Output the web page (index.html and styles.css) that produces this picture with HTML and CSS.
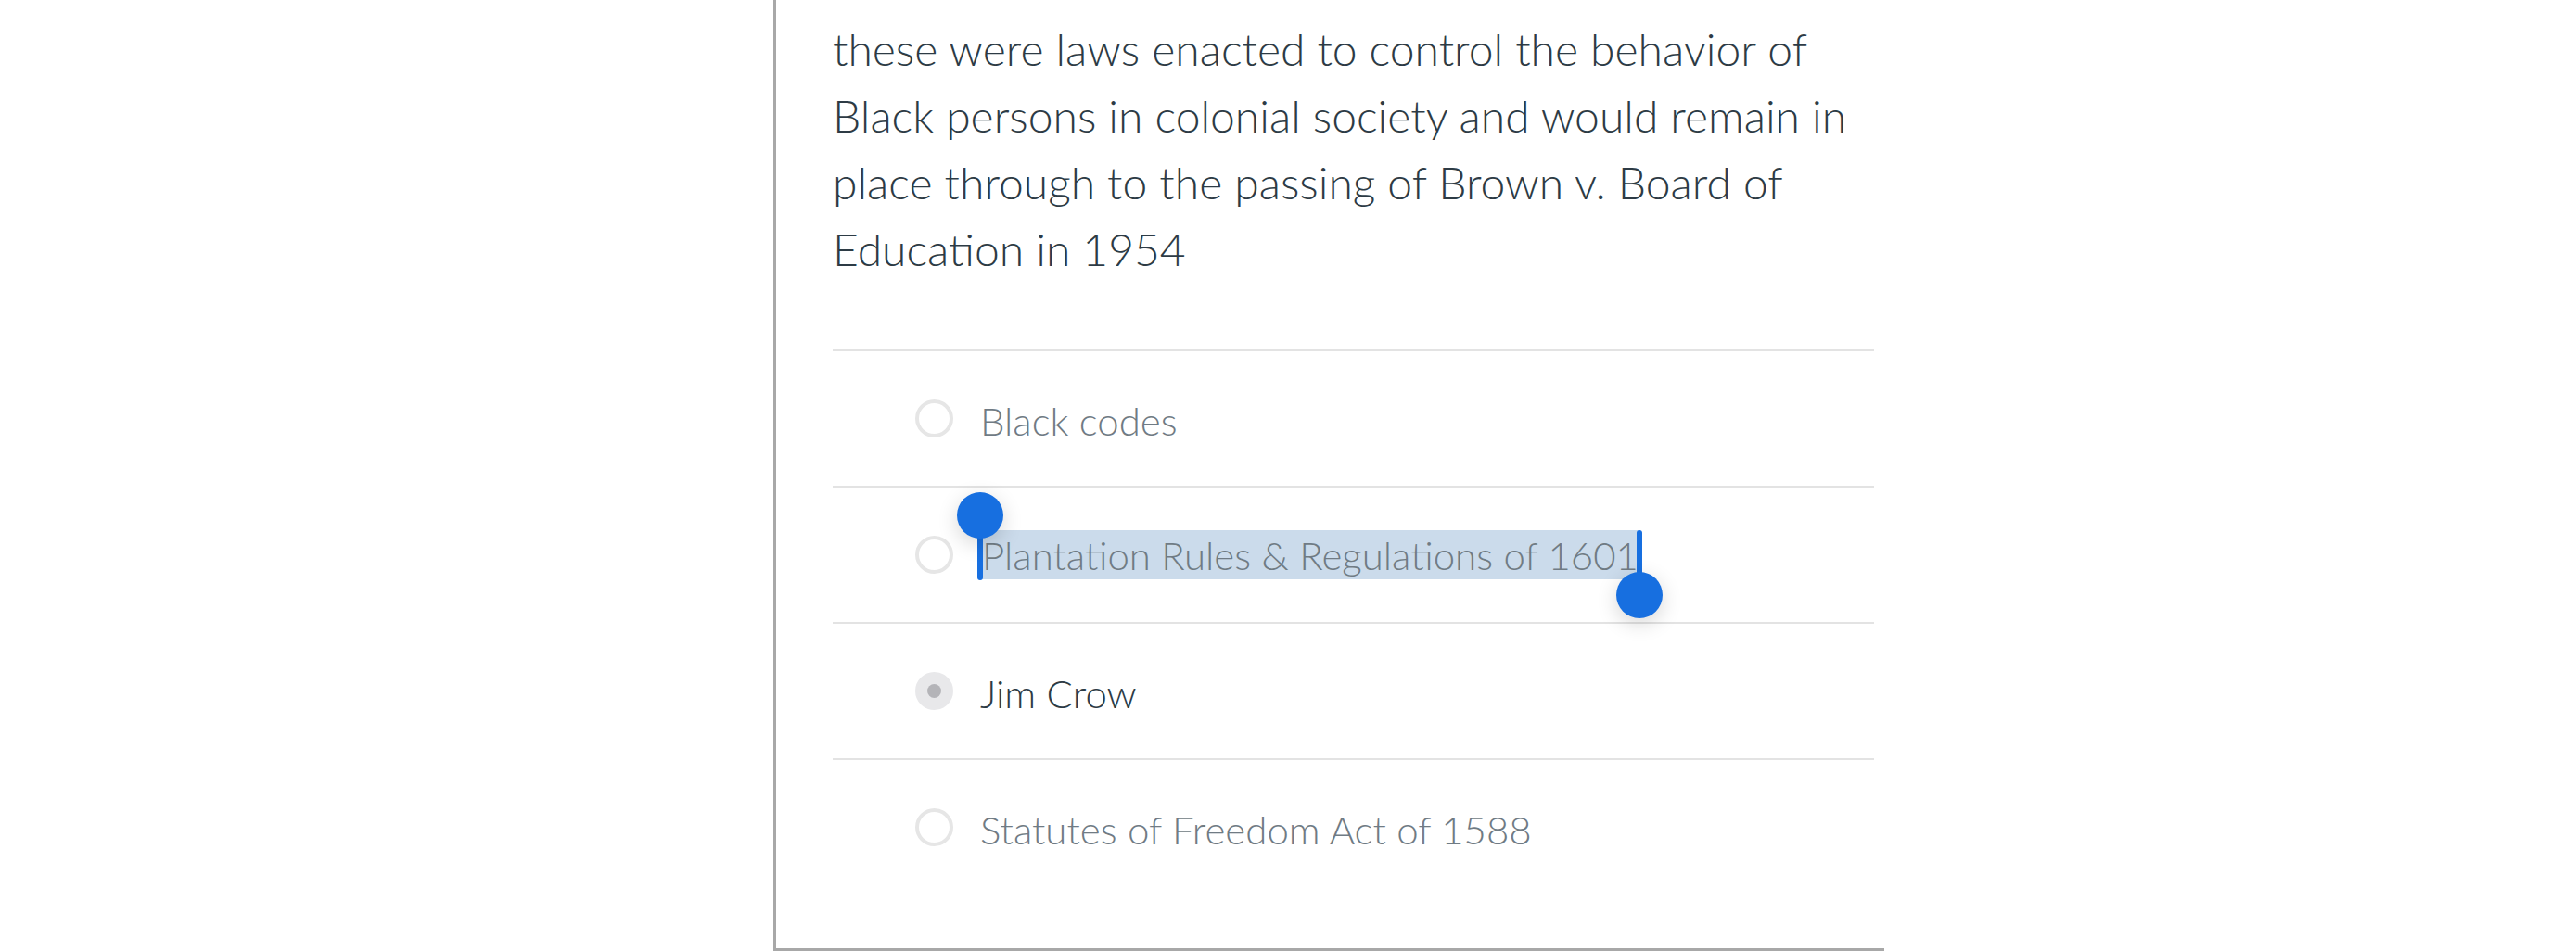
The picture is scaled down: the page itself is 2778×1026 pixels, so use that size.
FILE: index.html
```html
<!DOCTYPE html>
<html>
<head>
    <meta charset="utf-8" />
    <title>Quiz question</title>
    <link rel="stylesheet" href="styles.css">
</head>
<body>
    <div class="question-card">
        <div class="question-text">
            these were laws enacted to control the behavior of Black persons in colonial society and would remain in place through to the passing of Brown v. Board of Education in 1954
        </div>
        <ul class="answers">
            <li class="answer">
                <span class="radio"></span>
                <span class="answer-label">Black codes</span>
            </li>
            <li class="answer">
                <span class="radio"></span>
                <span class="answer-label selection">Plantation Rules &amp; Regulations of 1601<span class="handle handle-start"></span><span class="handle handle-end"></span></span>
            </li>
            <li class="answer" id="answer-checked">
                <span class="radio"></span>
                <span class="answer-label">Jim Crow</span>
            </li>
            <li class="answer">
                <span class="radio"></span>
                <span class="answer-label">Statutes of Freedom Act of 1588</span>
            </li>
        </ul>
    </div>
</body>
</html>
```

FILE: styles.css
```css
body {
    background-color: white;
    color: #2d3b45;
    font-family: Lato, "Open Sans", sans-serif;
    font-weight: 300;
    margin: 0px;
}

.question-card {
    margin-left: 834px;
    width: 1198px;
    height: 1026px;
    box-sizing: border-box;
    border-left: 3px solid #a8a8a8;
    border-bottom: 3px solid #a8a8a8;
    padding: 17px 0 0 61px;
}

.question-text {
    width: 1123px;
    font-size: 48px;
    line-height: 72px;
    color: #2d3b45;
}

.answers {
    list-style-type: none;
    margin: 72px 0 0 0;
    padding: 0;
    width: 1123px;
}

.answer {
    display: flex;
    align-items: center;
    height: 147px;
    box-sizing: border-box;
    border-top: 2px solid #e3e3e3;
    padding-left: 89px;
}

.answer .radio {
    width: 41px;
    height: 41px;
    box-sizing: border-box;
    border: 4px solid #e6e6e6;
    border-radius: 50%;
    margin-right: 29px;
    flex-shrink: 0;
    position: relative;
}

.answer-label {
    font-size: 42px;
    padding-top: 5px;
    color: #707b84;
}

#answer-checked .radio {
    background-color: #e8e8ea;
    border-color: #e8e8ea;
}

#answer-checked .radio::after {
    content: "";
    position: absolute;
    left: 9px;
    top: 9px;
    width: 15px;
    height: 15px;
    border-radius: 50%;
    background-color: #b4b4b8;
}

#answer-checked .answer-label {
    color: #2d3b45;
}

.selection {
    position: relative;
    background-color: #cbdbeb;
    padding: 2px 0 1px 2px;
}

.handle {
    position: absolute;
    width: 6px;
    height: 54px;
    background-color: #176fe0;
    border-radius: 3px;
}

.handle::before {
    content: "";
    position: absolute;
    left: -22px;
    width: 50px;
    height: 50px;
    border-radius: 50%;
    background-color: #176fe0;
    box-shadow: 0 6px 22px rgba(0, 0, 0, 0.16);
}

.handle-start {
    left: -3px;
    top: 0;
}

.handle-start::before {
    top: -41px;
}

.handle-end {
    right: -4px;
    top: 0;
}

.handle-end::before {
    top: 45px;
}
```
